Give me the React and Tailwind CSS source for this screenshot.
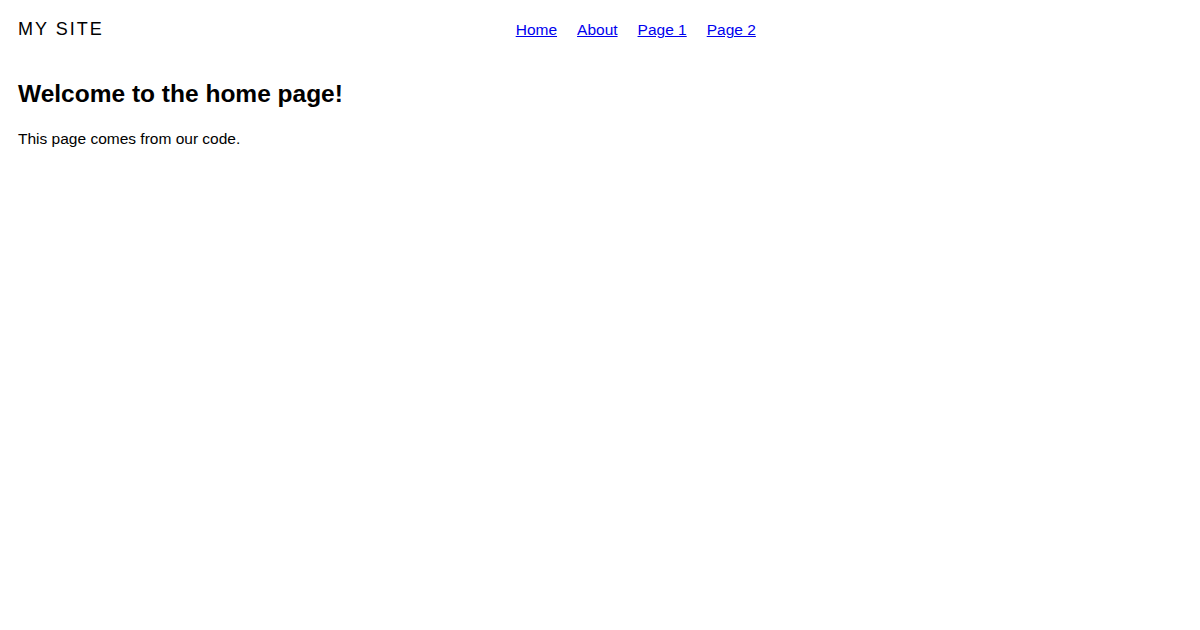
import React from "react";

const links = ["Home", "About", "Page 1", "Page 2"];

const App = () => {
    return (
        <div className="min-h-[630px] bg-white text-black font-['Liberation_Sans',Arial,sans-serif]">
            {/* Header */}
            <header className="flex items-center px-[18px] pt-[14px]">
                <div className="text-[18px] tracking-[2px] leading-[26px]">MY SITE</div>
                <nav className="ml-[412px] pt-[2px] flex gap-5 text-[15.5px] leading-[28px]">
                    {links.map((l) => (
                        <a key={l} href="#" className="text-[#0000ee] underline">
                            {l}
                        </a>
                    ))}
                </nav>
            </header>

            {/* Content */}
            <main className="px-[18px] pt-[35px]">
                <h1 className="text-[24.5px] font-bold leading-[30px]">Welcome to the home page!</h1>
                <p className="mt-[20px] text-[15.5px] leading-[20px]">This page comes from our code.</p>
            </main>
        </div>
    );
};

export default App;
